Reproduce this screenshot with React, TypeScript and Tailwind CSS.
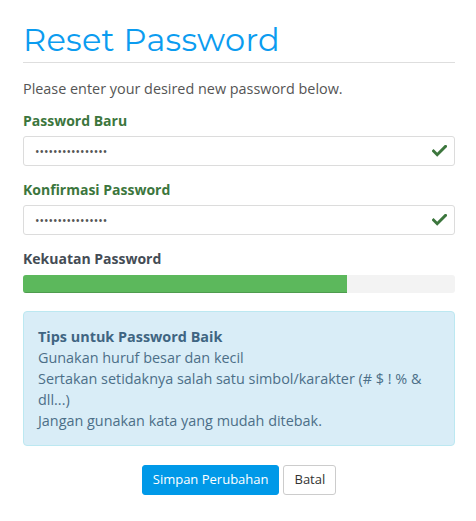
function OkIcon() {
  return (
    <svg
      viewBox="0 0 16 13"
      className="absolute right-[8px] top-[9px] w-[15px] h-[12px]"
      fill="none"
    >
      <polyline points="1.5,6.5 5.5,10.5 14.5,1.5" stroke="#3c763d" strokeWidth="3.2" strokeLinecap="square" />
    </svg>
  );
}

function PasswordInput() {
  return (
    <div className="relative mt-[5px]">
      <input
        type="password"
        defaultValue="abcdefghijklmnop"
        readOnly
        className="block w-full h-[30px] rounded-[3px] border border-[#dcdcdc] pl-[11px] pr-[30px] text-[12px] text-[#555] outline-none"
      />
      <OkIcon />
    </div>
  );
}

export default function App() {
  return (
    <div className="bg-white w-[476px] min-h-[521px] pl-[23px] pr-[21px] pt-[18px] text-[14.4px] text-[#555] font-['Open_Sans',sans-serif]">
      <h1 className="text-[32px] leading-[44px] text-[#0b9cf0] font-['Montserrat','Open_Sans',sans-serif] font-normal tracking-[0.3px]">
        Reset Password
      </h1>
      <div className="border-b border-[#dedede]" />
      <p className="mt-[16px] leading-[20px]">Please enter your desired new password below.</p>

      <label className="block mt-[12px] text-[14px] font-bold text-[#3c763d] leading-[20px]">Password Baru</label>
      <PasswordInput />

      <label className="block mt-[14px] text-[14px] font-bold text-[#3c763d] leading-[20px]">Konfirmasi Password</label>
      <PasswordInput />

      <label className="block mt-[14px] text-[14px] font-bold text-[#444c55] leading-[20px]">Kekuatan Password</label>
      <div className="mt-[6px] h-[18px] w-full rounded-[3px] bg-[#f3f3f3] overflow-hidden">
        <div className="h-full w-[75%] bg-[#5cb85c] shadow-[inset_0_-1px_0_rgba(0,0,0,0.15)]" />
      </div>

      <div className="mt-[18px] rounded-[4px] border border-[#bce8f1] bg-[#d9edf7] px-[14px] py-[14px] leading-[21px] text-[#4c6f88]">
        <div className="font-bold text-[#3f6582]">Tips untuk Password Baik</div>
        <div>Gunakan huruf besar dan kecil</div>
        <div>Sertakan setidaknya salah satu simbol/karakter (# $ ! % &amp; dll...)</div>
        <div>Jangan gunakan kata yang mudah ditebak.</div>
      </div>

      <div className="mt-[19px] flex justify-center gap-[4px]">
        <button className="h-[30px] px-[10px] rounded-[3px] bg-[#0099e8] text-white text-[13px] border border-[#0099e8]">
          Simpan Perubahan
        </button>
        <button className="h-[30px] px-[10px] rounded-[3px] bg-white text-[#333] text-[13px] border border-[#ccc]">
          Batal
        </button>
      </div>
    </div>
  );
}
